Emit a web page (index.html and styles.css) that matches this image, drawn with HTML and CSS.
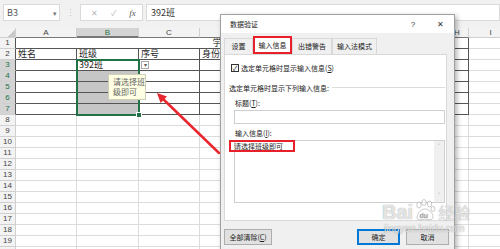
FILE: index.html
```html
<!DOCTYPE html>
<html lang="zh-CN">
<head>
  <meta charset="UTF-8" />
  <title>数据验证</title>
  <link rel="stylesheet" href="styles.css">
</head>
<body>
<div class="app">

  <!-- Formula bar -->
  <div class="formula-bar">
    <div class="name-box"><span>B3</span><span class="caret">▾</span></div>
    <div class="dots">⋮</div>
    <div class="fx-tools"><span>✕</span><span>✓</span><span class="fx">fx</span></div>
    <div class="formula-input">392班</div>
  </div>

  <!-- Sheet grid -->
  <div class="sheet">
    <div class="row head"><div class="corner"></div><div>A</div><div class="selcol">B</div><div>C</div><div>D</div><div>E</div><div>F</div><div>G</div><div>H</div><div>I</div><div>J</div></div>
    <div class="row r1"><div class="rh">1</div><div class="title-cell">学生信息登记</div><div></div><div></div></div>
    <div class="row tbl"><div class="rh">2</div><div>姓名</div><div>班级</div><div>序号</div><div>身份证号</div><div></div><div></div><div></div><div></div><div></div><div></div></div>
    <div class="row tbl"><div class="rh on">3</div><div></div><div>392班</div><div><span class="dd">▾</span></div><div></div><div></div><div></div><div></div><div></div><div></div><div></div></div>
    <div class="row tbl"><div class="rh on">4</div><div></div><div class="fill"></div><div></div><div></div><div></div><div></div><div></div><div></div><div></div><div></div></div>
    <div class="row tbl"><div class="rh on">5</div><div></div><div class="fill"></div><div></div><div></div><div></div><div></div><div></div><div></div><div></div><div></div></div>
    <div class="row tbl"><div class="rh on">6</div><div></div><div class="fill"></div><div></div><div></div><div></div><div></div><div></div><div></div><div></div><div></div></div>
    <div class="row tbl"><div class="rh on">7</div><div></div><div class="fill"></div><div></div><div></div><div></div><div></div><div></div><div></div><div></div><div></div></div>
    <div class="row"><div class="rh">8</div><div></div><div></div><div></div><div></div><div></div><div></div><div></div><div></div><div></div><div></div></div>
    <div class="row"><div class="rh">9</div><div></div><div></div><div></div><div></div><div></div><div></div><div></div><div></div><div></div><div></div></div>
    <div class="row"><div class="rh">10</div><div></div><div></div><div></div><div></div><div></div><div></div><div></div><div></div><div></div><div></div></div>
    <div class="row"><div class="rh">11</div><div></div><div></div><div></div><div></div><div></div><div></div><div></div><div></div><div></div><div></div></div>
    <div class="row"><div class="rh">12</div><div></div><div></div><div></div><div></div><div></div><div></div><div></div><div></div><div></div><div></div></div>
    <div class="row"><div class="rh">13</div><div></div><div></div><div></div><div></div><div></div><div></div><div></div><div></div><div></div><div></div></div>
    <div class="row"><div class="rh">14</div><div></div><div></div><div></div><div></div><div></div><div></div><div></div><div></div><div></div><div></div></div>
    <div class="row"><div class="rh">15</div><div></div><div></div><div></div><div></div><div></div><div></div><div></div><div></div><div></div><div></div></div>
    <div class="row"><div class="rh">16</div><div></div><div></div><div></div><div></div><div></div><div></div><div></div><div></div><div></div><div></div></div>
    <div class="row"><div class="rh">17</div><div></div><div></div><div></div><div></div><div></div><div></div><div></div><div></div><div></div><div></div></div>
    <div class="row"><div class="rh">18</div><div></div><div></div><div></div><div></div><div></div><div></div><div></div><div></div><div></div><div></div></div>
    <div class="row"><div class="rh">19</div><div></div><div></div><div></div><div></div><div></div><div></div><div></div><div></div><div></div><div></div></div>
    <div class="row"><div class="rh">20</div><div></div><div></div><div></div><div></div><div></div><div></div><div></div><div></div><div></div><div></div></div>

    <div class="selection"></div>
    <div class="handle"></div>
  </div>

  <!-- Input message tooltip -->
  <div class="tip">请选择班<br>级即可</div>

  <!-- Data validation dialog -->
  <div class="dialog">
    <div class="dlg-title">
      <span>数据验证</span>
      <span class="dlg-btn help">?</span>
      <span class="dlg-btn">✕</span>
    </div>
    <div class="tabs">
      <div class="tab t1">设置</div>
      <div class="tab active">输入信息</div>
      <div class="tab t3">出错警告</div>
      <div class="tab t4">输入法模式</div>
    </div>
    <div class="panel">
      <div class="check"><span class="box">✓</span>选定单元格时显示输入信息(<u>S</u>)</div>
      <div class="group">选定单元格时显示下列输入信息:</div>
      <div class="field-label">标题(<u>T</u>):</div>
      <div class="input"></div>
      <div class="field-label">输入信息(<u>I</u>):</div>
      <div class="textarea">
        <div class="ta-text"><span class="mark">请选择班级即可</span></div>
        <div class="scrollbar"><span>˄</span><span>˅</span></div>
      </div>
    </div>
    <div class="buttons">
      <div class="btn clear">全部清除(<u>C</u>)</div>
      <div class="btn primary">确定</div>
      <div class="btn">取消</div>
    </div>
  </div>

  <!-- watermark -->
  <div class="watermark">
    <div class="wm-logo">
      <span class="wm-bai">Bai</span>
      <svg class="paw" width="22" height="22" viewBox="0 0 22 22">
        <ellipse cx="5" cy="6" rx="2.2" ry="3" />
        <ellipse cx="10" cy="3.5" rx="2.2" ry="3" />
        <ellipse cx="15.5" cy="5" rx="2.2" ry="3" />
        <ellipse cx="19" cy="10" rx="2" ry="2.6" />
        <path d="M3 19 C3 13 8 10 11 10 C15 10 19 14 19 18 C19 21 15 21 11 20 C7 21 3 21 3 19 Z" />
        <text x="5.5" y="18.5">du</text>
      </svg>
      <span class="wm-jy">经验</span>
    </div>
    <div class="wm-url">jingyan.baidu.com</div>
  </div>

  <!-- red arrow -->
  <svg class="arrow" width="500" height="249" viewBox="0 0 500 249">
    <line x1="219" y1="153" x2="162" y2="98" stroke="#e8262e" stroke-width="2.5" stroke-linecap="round" />
    <polygon points="157,93 167,96.6 160.6,103" fill="#e8262e" />
  </svg>

</div>
</body>
</html>
```

FILE: styles.css
```css
* {
  margin: 0;
  padding: 0;
  box-sizing: border-box;
}

body {
  width: 500px;
  height: 249px;
  overflow: hidden;
  font-family: "Noto Sans CJK SC", "Liberation Sans", sans-serif;
  background-color: #fff;
  color: #222;
}

.app {
  position: relative;
  width: 500px;
  height: 249px;
  overflow: hidden;
}

/* formula bar */
.formula-bar {
  height: 28px;
  background-color: #f1f1f1;
  display: flex;
  align-items: flex-start;
  padding: 4px 0 0 3px;
}

.name-box {
  width: 57px;
  height: 17px;
  background-color: #fff;
  border: 1px solid #d9d9d9;
  display: flex;
  align-items: center;
  justify-content: space-between;
  padding: 0 2px 0 3px;
  font-size: 9px;
  color: #555;
}

.caret {
  font-size: 7px;
  color: #777;
}

.dots {
  width: 20px;
  text-align: center;
  color: #c4c4c4;
  font-size: 9px;
  line-height: 17px;
}

.fx-tools {
  width: 63px;
  height: 17px;
  background-color: #fff;
  border: 1px solid #d9d9d9;
  display: flex;
  align-items: center;
  justify-content: space-around;
  padding-left: 4px;
  font-size: 8px;
  color: #b8b8b8;
}

.fx {
  font-family: "Liberation Serif", serif;
  font-style: italic;
  font-size: 9px;
  color: #555;
}

.formula-input {
  flex: 1;
  height: 17px;
  margin-left: 3px;
  background-color: #fff;
  border: 1px solid #d9d9d9;
  font-size: 9px;
  line-height: 15px;
  padding-left: 4px;
  color: #333;
}

/* sheet */
.sheet {
  position: relative;
}

.row {
  display: grid;
  grid-template-columns: 16px 61px 62px 61px 62px 61px 62px 61px 23px 44px 40px;
  height: 11px;
}

.row > div {
  border-right: 1px solid #dcdcdc;
  border-bottom: 1px solid #dcdcdc;
  font-size: 9px;
  line-height: 10px;
  padding-left: 2px;
  white-space: nowrap;
  overflow: hidden;
  color: #222;
}

.row > .rh {
  background-color: #f3f3f3;
  border-color: #d0d0d0;
  text-align: center;
  padding: 0;
  font-family: "Liberation Sans", sans-serif;
  font-size: 8px;
  color: #444;
}

.row.head {
  height: 10px;
}

.row.head > div {
  background-color: #f3f3f3;
  border-color: #d0d0d0;
  text-align: center;
  padding: 0;
  font-family: "Liberation Sans", sans-serif;
  font-size: 8px;
  line-height: 9px;
  color: #444;
}

.row.head > div:nth-child(n+2):nth-child(-n+9) {
  border-bottom-color: #777;
}

.row.head > div.selcol {
  background-color: #d4d4d4;
  border-bottom: 2px solid #217346;
  color: #217346;
}

.corner {
  background: linear-gradient(135deg, #f3f3f3 70%, #c9c9c9 70%) !important;
}

/* table region with dark borders */
.r1 > .title-cell {
  grid-column: span 8;
  text-align: center;
  padding: 0 5px 0 0;
  border-right-color: #555;
  border-bottom-color: #555;
}

.r1 > .rh,
.tbl > .rh {
  border-right-color: #555;
}

.tbl > div:nth-child(n+2):nth-child(-n+9) {
  border-right-color: #555;
  border-bottom-color: #555;
}

.row > .rh.on {
  background-color: #d4d4d4;
  color: #217346;
}

.row > .fill {
  background-color: #c6c6c6;
}

.dd {
  display: inline-block;
  width: 8px;
  height: 8px;
  margin-top: 1px;
  border: 1px solid #aaa;
  background-color: #fff;
  font-size: 6px;
  line-height: 6px;
  text-align: center;
  color: #555;
  vertical-align: top;
}

.selection {
  position: absolute;
  left: 76px;
  top: 31px;
  width: 64px;
  height: 57px;
  border: 2px solid #217346;
}

.handle {
  position: absolute;
  left: 136px;
  top: 84px;
  width: 6px;
  height: 6px;
  background-color: #217346;
  border: 1px solid #fff;
}

/* tooltip */
.tip {
  position: absolute;
  left: 108px;
  top: 74px;
  width: 38px;
  height: 26px;
  padding: 2px 0 0 4px;
  background-color: #ffffe3;
  border: 1px solid #cfcfb8;
  font-size: 8px;
  line-height: 10px;
  color: #666;
}

/* dialog */
.dialog {
  position: absolute;
  left: 220px;
  top: 14px;
  width: 235px;
  height: 240px;
  background-color: #f0f0f0;
  border: 1px solid #a0a0a0;
  box-shadow: 2px 2px 5px rgba(0, 0, 0, 0.3);
  font-size: 7px;
  color: #222;
}

.dlg-title {
  height: 18px;
  background-color: #fff;
  display: flex;
  align-items: center;
  padding-left: 9px;
}

.dlg-btn {
  width: 28px;
  text-align: center;
  font-family: "Liberation Sans", sans-serif;
  font-size: 8px;
  color: #333;
}

.dlg-btn.help {
  margin-left: auto;
  width: 26px;
}

.tabs {
  display: flex;
  align-items: flex-end;
  height: 21px;
  padding-left: 3px;
}

.tab {
  height: 16px;
  line-height: 15px;
  text-align: center;
  background-color: #f0f0f0;
  border: 1px solid #d9d9d9;
  border-bottom: none;
}

.tab.t1 { width: 29px; }
.tab.t3 { width: 40px; }
.tab.t4 { width: 45px; }

.tab.active {
  width: 39px;
  height: 18px;
  line-height: 14px;
  background-color: #fff;
  border: 2px solid #e8202a;
}

.panel {
  margin: 0 7px 0 3px;
  height: 167px;
  background-color: #fff;
  border: 1px solid #d9d9d9;
  padding-top: 8px;
}

.check {
  display: flex;
  align-items: center;
  height: 9px;
  padding-left: 6px;
}

.box {
  width: 8px;
  height: 8px;
  margin-right: 2px;
  border: 1px solid #333;
  font-size: 7px;
  line-height: 6px;
  text-align: center;
}

.group {
  display: flex;
  align-items: center;
  height: 9px;
  margin: 11px 1px 0 4px;
}

.group::after {
  content: "";
  flex: 1;
  margin-left: 3px;
  border-top: 1px solid #dcdcdc;
}

.field-label {
  height: 9px;
  line-height: 9px;
  padding-left: 10px;
  margin-top: 7px;
}

.input {
  margin: 2px 0 0 9px;
  width: 211px;
  height: 14px;
  border: 1px solid #cfcfcf;
}

.input + .field-label {
  margin-top: 5px;
}

.textarea {
  display: flex;
  margin: 2px 0 0 9px;
  width: 211px;
  height: 63px;
  border: 1px solid #cfcfcf;
}

.ta-text {
  flex: 1;
}

.mark {
  display: inline-block;
  height: 12px;
  margin: -1px 0 0 -6px;
  padding: 0 10px 0 3px;
  border: 2px solid #e8202a;
  line-height: 8px;
  color: #222;
}

.scrollbar {
  width: 10px;
  background-color: #f0f0f0;
  display: flex;
  flex-direction: column;
  justify-content: space-between;
  align-items: center;
  padding: 3px 0 2px;
  font-family: "DejaVu Sans", sans-serif;
  font-size: 7px;
  line-height: 7px;
  color: #bbb;
}

.buttons {
  display: flex;
  margin: 8px 5px 0 3px;
}

.btn {
  width: 43px;
  height: 16px;
  line-height: 14px;
  text-align: center;
  background-color: #e1e1e1;
  border: 1px solid #adadad;
}

.btn.clear {
  width: 48px;
  margin-right: auto;
}

.btn.primary {
  border-color: #0078d7;
  box-shadow: inset 0 0 0 1px #0078d7;
  margin-right: 6px;
}

/* watermark */
.watermark {
  position: absolute;
  left: 382px;
  top: 193px;
  color: rgba(255, 255, 255, 0.75);
  text-shadow: 0 0 1px rgba(90, 90, 90, 0.7);
}

.wm-logo {
  display: flex;
  align-items: flex-end;
  height: 30px;
}

.wm-bai {
  font-family: "Liberation Sans", sans-serif;
  font-weight: bold;
  font-size: 20px;
  line-height: 22px;
}

.paw {
  margin: 0 2px 2px 1px;
  fill: rgba(255, 255, 255, 0.6);
  stroke: rgba(120, 120, 120, 0.55);
  stroke-width: 0.7;
}

.paw text {
  font-family: "Liberation Sans", sans-serif;
  font-size: 7px;
  font-weight: bold;
  stroke: none;
  fill: rgba(140, 140, 140, 0.6);
}

.wm-jy {
  font-size: 16px;
  line-height: 22px;
}

.wm-url {
  font-family: "Liberation Sans", sans-serif;
  font-size: 10px;
  line-height: 12px;
  padding-left: 2px;
}

.arrow {
  position: absolute;
  left: 0;
  top: 0;
}
```
